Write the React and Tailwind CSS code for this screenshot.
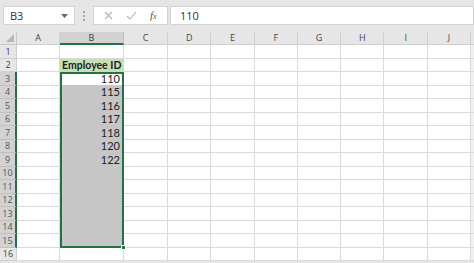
import React from 'react';

const cols = ['A', 'B', 'C', 'D', 'E', 'F', 'G', 'H', 'I', 'J'];
const values = { 3: '110', 4: '115', 5: '116', 6: '117', 7: '118', 8: '120', 9: '122' };

export default function App() {
  const rows = Array.from({ length: 16 }, (_, i) => i + 1);

  return (
    <div className="w-[474px] h-[263px] overflow-hidden bg-[#e6e6e6] font-['Open_Sans','Liberation_Sans',sans-serif] text-[#222] select-none">
      {/* formula bar */}
      <div className="h-[32px] flex items-start pt-[6px] pl-[3px]">
        <div className="w-[72px] h-[19px] bg-white border border-[#d4d4d4] flex items-center justify-between px-[6px]">
          <span className="text-[11px] text-[#333] leading-none">B3</span>
          <svg width="7" height="4" viewBox="0 0 7 4"><path d="M0 0h7L3.5 4z" fill="#666" /></svg>
        </div>
        <div className="w-[18px] h-[19px] flex flex-col items-center justify-center gap-[2px]">
          <span className="w-[2px] h-[2px] bg-[#aaa]" />
          <span className="w-[2px] h-[2px] bg-[#aaa]" />
          <span className="w-[2px] h-[2px] bg-[#aaa]" />
        </div>
        <div className="w-[75px] h-[19px] bg-white border border-[#d4d4d4] flex items-center justify-around px-[4px]">
          <svg width="9" height="9" viewBox="0 0 9 9"><path d="M1 1l7 7M8 1L1 8" stroke="#b4b4b4" strokeWidth="1.1" /></svg>
          <svg width="11" height="9" viewBox="0 0 11 9"><path d="M1 5l3 3 6-7" stroke="#b4b4b4" strokeWidth="1.1" fill="none" /></svg>
          <span className="text-[11px] italic font-['Liberation_Serif',serif] text-[#555] leading-none">f<span className="text-[8px]">x</span></span>
        </div>
        <div className="ml-[2px] flex-1 h-[19px] bg-white border border-[#d4d4d4] flex items-center pl-[9px]">
          <span className="text-[11px] text-[#333] leading-none">110</span>
        </div>
      </div>

      {/* sheet */}
      <div className="relative bg-white">
        <div className="grid grid-cols-[17px_43px_64px_44px_repeat(7,43.3px)_1fr] grid-rows-[13px_repeat(16,13.5px)]">
          {/* header row */}
          <div className="bg-[#e6e6e6] border-r border-b border-[#c8c8c8] relative">
            <svg className="absolute right-[2px] bottom-[2px]" width="8" height="8" viewBox="0 0 8 8"><path d="M8 0v8H0z" fill="#b6b6b6" /></svg>
          </div>
          {cols.map((c) => (
            <div
              key={c}
              className={
                c === 'B'
                  ? 'bg-[#d2d2d2] border-r border-[#c0c0c0] border-b-2 border-b-[#217346] flex items-center justify-center text-[9px] text-[#444]'
                  : 'bg-[#e6e6e6] border-r border-b border-[#d0d0d0] flex items-center justify-center text-[9px] text-[#444]'
              }
            >
              {c}
            </div>
          ))}
          <div className="bg-[#e6e6e6] border-b border-[#d0d0d0]" />

          {rows.map((r) => {
            const sel = r >= 3 && r <= 15;
            return (
              <React.Fragment key={r}>
                <div
                  className={
                    sel
                      ? 'bg-[#d2d2d2] border-b border-[#c0c0c0] border-r-2 border-r-[#217346] flex items-center justify-center text-[9px] text-[#555]'
                      : 'bg-[#e6e6e6] border-b border-r border-[#d0d0d0] flex items-center justify-center text-[9px] text-[#444]'
                  }
                >
                  {r}
                </div>
                {cols.map((c) => {
                  if (c === 'B') {
                    if (r === 2) {
                      return (
                        <div key={c} className="bg-[#c6e0b4] border-r border-b border-[#d4d4d4] flex items-center pl-[2px] whitespace-nowrap overflow-hidden font-['Lato','Liberation_Sans',sans-serif] text-[10.5px] font-bold text-[#222] leading-none">
                          Employee ID
                        </div>
                      );
                    }
                    if (sel) {
                      return (
                        <div
                          key={c}
                          className={(r === 3 ? 'bg-white' : 'bg-[#c6c6c6]') + " border-b border-[#c6c6c6] flex items-center justify-end pr-[4px] font-['Lato','Liberation_Sans',sans-serif] text-[11px] text-[#222] leading-none"}
                        >
                          {values[r] || ''}
                        </div>
                      );
                    }
                  }
                  return <div key={c} className="border-r border-b border-[#dadada]" />;
                })}
                <div className="border-b border-[#dadada] bg-[#f0f0f0]" />
              </React.Fragment>
            );
          })}
        </div>

        {/* selection outline B3:B15 */}
        <div className="absolute left-[60px] top-[40px] w-[64px] h-[175.5px] border-2 border-[#217346] pointer-events-none">
          <div className="absolute -right-[4px] -bottom-[4px] w-[5px] h-[5px] bg-[#217346] border border-white" />
        </div>
      </div>
    </div>
  );
}
